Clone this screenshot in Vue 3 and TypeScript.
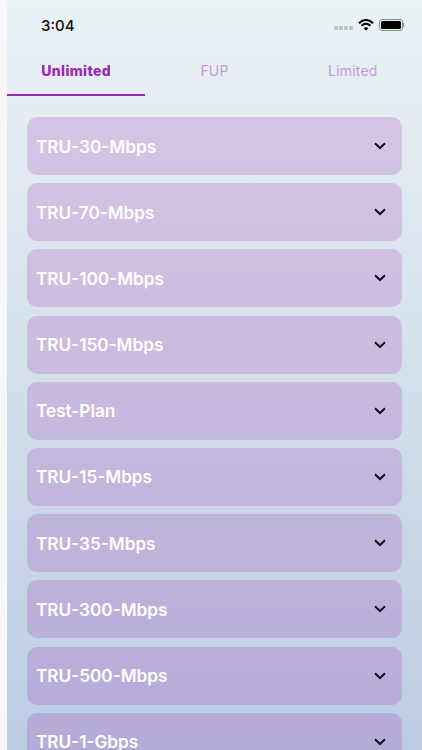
<script setup lang="ts">
const tabs: string[] = ['Unlimited', 'FUP', 'Limited']
const plans: string[] = [
  'TRU-30-Mbps', 'TRU-70-Mbps', 'TRU-100-Mbps', 'TRU-150-Mbps', 'Test-Plan',
  'TRU-15-Mbps', 'TRU-35-Mbps', 'TRU-300-Mbps', 'TRU-500-Mbps', 'TRU-1-Gbps',
]
</script>

<template>
  <div class="page">
    <div class="screen">
      <header class="status">
        <span class="time">3:04</span>
        <div class="indicators">
          <span class="signal"><i></i><i></i><i></i><i></i></span>
          <svg class="wifi" width="16" height="12" viewBox="0 0 16 12">
            <path d="M1 4.2C5-.1 11-.1 15 4.2" fill="none" stroke="#000" stroke-width="2" />
            <path d="M3.6 6.8C6.2 4.2 9.8 4.2 12.4 6.8" fill="none" stroke="#000" stroke-width="2" />
            <path d="M8 11.8 5.6 9.1C7 7.9 9 7.9 10.4 9.1Z" fill="#000" />
          </svg>
          <span class="battery"><span class="level"></span></span>
          <span class="cap"></span>
        </div>
      </header>
      <nav class="tabs">
        <div v-for="(tab, i) in tabs" :key="tab" class="tab" :class="{ active: i === 0 }">{{ tab }}</div>
      </nav>
      <main class="list">
        <div v-for="plan in plans" :key="plan" class="plan">
          <span class="name">{{ plan }}</span>
          <svg class="chevron" width="12" height="8" viewBox="0 0 12 8">
            <path d="M1 1.2 6 6 11 1.2" fill="none" stroke="#14101c" stroke-width="2" />
          </svg>
        </div>
      </main>
    </div>
  </div>
</template>

<style>
html, body { margin: 0; height: 100%; overflow: hidden; background: #f6f7f8; }
</style>

<style scoped>
.page { height: 750px; padding-left: 7px; overflow: hidden; box-sizing: border-box; }
.screen {
  height: 750px; overflow: hidden;
  background: linear-gradient(180deg, #e9f2f5 0%, #e3ebf1 20%, #bccce3 100%);
  font-family: "Inter", "Liberation Sans", sans-serif;
}
.status { height: 48px; display: flex; align-items: center; justify-content: space-between; padding: 2px 18px 0 34px; box-sizing: border-box; }
.time { font-size: 15px; font-weight: 500; color: #111; }
.indicators { display: flex; align-items: center; }
.signal { display: flex; gap: 1px; margin: 5px 5px 0 0; }
.signal i { width: 4px; height: 4px; background: #bdc3c7; border-radius: 1px; }
.wifi { margin-right: 5px; }
.battery { width: 24px; height: 12px; border: 1px solid #8a8d90; border-radius: 3px; padding: 1px; box-sizing: border-box; display: flex; }
.level { flex: 1; background: #000; border-radius: 1.5px; }
.cap { width: 1px; height: 4px; background: #8a8d90; }
.tabs { display: flex; height: 48px; }
.tab {
  flex: 1; display: flex; align-items: center; justify-content: center;
  padding-bottom: 2px; box-sizing: border-box; border-bottom: 2px solid transparent;
  font-size: 14px; color: #c59ad8; letter-spacing: 0.2px;
}
.tab.active { color: #9c27b0; font-weight: 800; letter-spacing: 0.35px; border-bottom-color: #9c27b0; }
.list { display: flex; flex-direction: column; gap: 8.2px; padding: 21px 20px 0 19.5px; }
.plan {
  flex: none; height: 58px; border-radius: 10px; padding: 0 16px 0 9.5px;
  display: flex; align-items: center; justify-content: space-between;
  background: rgba(156, 39, 176, 0.2);
}
.name { font-size: 17.2px; font-weight: 600; color: #ffffff; }
</style>
